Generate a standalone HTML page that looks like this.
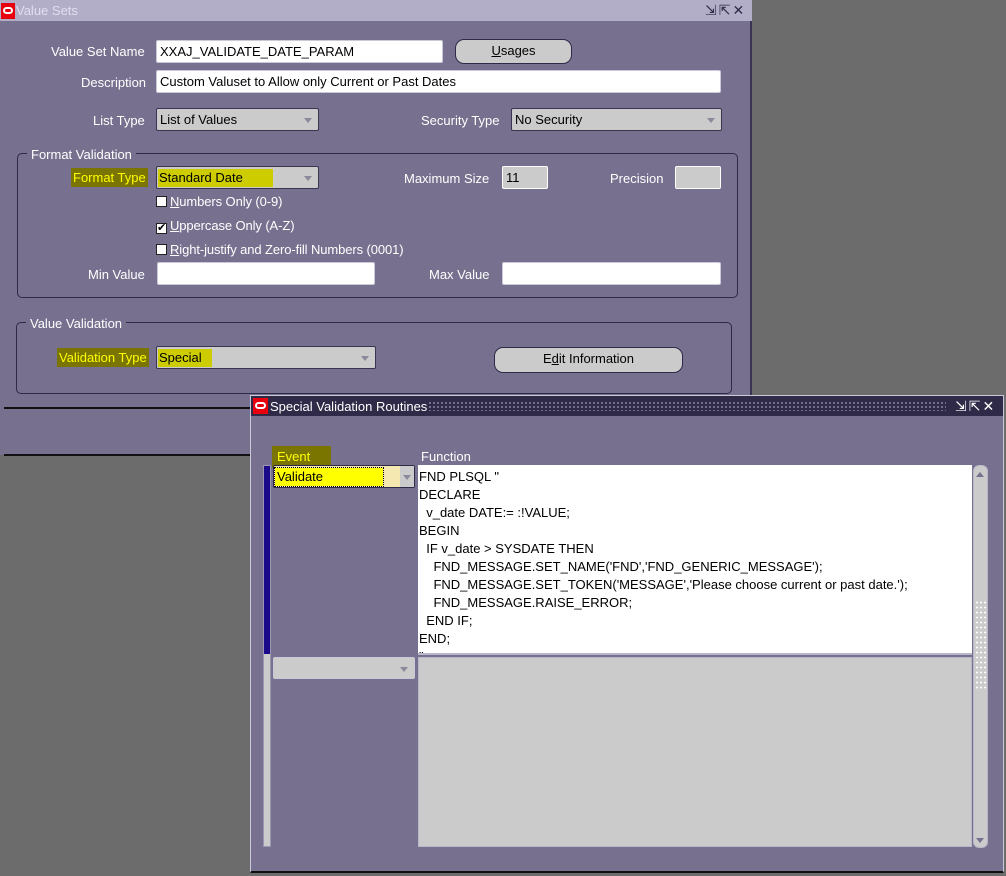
<!DOCTYPE html>
<html><head><style>
*{margin:0;padding:0;box-sizing:border-box}
body{width:1006px;height:876px;background:#6c6c6c;position:relative;overflow:hidden;font-family:"Liberation Sans",Arial,sans-serif;font-size:13px;color:#000}
.a{position:absolute}
.lbl{position:absolute;color:#fff;font-size:13px;white-space:nowrap}
.fld{position:absolute;background:#fff;border:1px solid #c9c9d9;border-radius:2px;height:23px;padding:2px 3px;font-size:13px;line-height:17px;white-space:nowrap}
.gr{background:#cbcbcb;border:1px solid #3a3550}
.dd::after{content:"";position:absolute;right:6px;top:9px;border-left:4px solid transparent;border-right:4px solid transparent;border-top:5px solid #8a8a9a}
.btn{position:absolute;background:#cbcbcb;border:1px solid #2e2a48;border-radius:9px;text-align:center;font-size:13px;line-height:22px}
.grp{position:absolute;border:1px solid #2e2a48;border-radius:5px}
.hl{background:#7a7500;color:#ffff00}
.cb{display:inline-block;width:11px;height:11px;background:#fff;border:1px solid #222;vertical-align:-1px;margin-right:3px}
</style></head><body>
<div class="a" style="left:0;top:0;width:752px;height:455px;background:#77708f;border-right:2px solid #3a3550"></div>
<div class="a" style="left:0;top:0;width:752px;height:21px;background:#b3aec7"></div>
<div class="a" style="left:1px;top:3px;width:14px;height:16px;background:#e8000c"><div class="a" style="left:2px;top:4px;width:10px;height:7px;border:2px solid #fff;border-radius:4px"></div></div>
<div class="lbl" style="left:16px;top:3px;color:#e0def0">Value Sets</div>
<div class="lbl" style="left:705px;top:2px;color:#2e2a48;font-size:14px;letter-spacing:2px">⇲⇱✕</div>
<div class="a" style="left:4px;top:407px;width:748px;height:2px;background:#111"></div>
<div class="a" style="left:4px;top:454px;width:748px;height:2px;background:#111"></div>

<div class="lbl" style="left:51px;top:44px">Value Set Name</div>
<div class="fld" style="left:156px;top:40px;width:287px">XXAJ_VALIDATE_DATE_PARAM</div>
<div class="btn" style="left:455px;top:39px;width:117px;height:25px"><u>U</u>sages</div>
<div class="lbl" style="left:81px;top:75px">Description</div>
<div class="fld" style="left:156px;top:70px;width:565px">Custom Valuset to Allow only Current or Past Dates</div>
<div class="lbl" style="left:93px;top:113px">List Type</div>
<div class="fld gr dd" style="left:156px;top:108px;width:163px">List of Values</div>
<div class="lbl" style="left:421px;top:113px">Security Type</div>
<div class="fld gr dd" style="left:511px;top:108px;width:211px">No Security</div>

<div class="grp" style="left:17px;top:153px;width:721px;height:145px"></div>
<div class="lbl" style="left:27px;top:147px;background:#77708f;padding:0 4px">Format Validation</div>
<div class="lbl hl" style="left:71px;top:168px;padding:2px 2px">Format Type</div>
<div class="fld gr dd" style="left:156px;top:166px;width:163px"><span style="background:#cccc00;padding:1px 30px 2px 1px;margin-left:-2px">Standard Date</span></div>
<div class="lbl" style="left:156px;top:194px;letter-spacing:-0.1px"><span class="cb"></span><u>N</u>umbers Only (0-9)</div>
<div class="lbl" style="left:156px;top:218px;letter-spacing:-0.1px"><span class="cb" style="font-size:11px;line-height:9px;color:#000;text-align:center">✔</span><u>U</u>ppercase Only (A-Z)</div>
<div class="lbl" style="left:156px;top:242px;letter-spacing:-0.1px"><span class="cb"></span><u>R</u>ight-justify and Zero-fill Numbers (0001)</div>
<div class="lbl" style="left:404px;top:171px">Maximum Size</div>
<div class="fld gr" style="left:502px;top:166px;width:46px;border-color:#fff">11</div>
<div class="lbl" style="left:610px;top:171px">Precision</div>
<div class="fld gr" style="left:675px;top:166px;width:46px;border-color:#fff"></div>
<div class="lbl" style="left:88px;top:267px">Min Value</div>
<div class="fld" style="left:157px;top:262px;width:218px"></div>
<div class="lbl" style="left:429px;top:267px">Max Value</div>
<div class="fld" style="left:502px;top:262px;width:219px"></div>

<div class="grp" style="left:16px;top:322px;width:716px;height:72px"></div>
<div class="lbl" style="left:26px;top:316px;background:#77708f;padding:0 4px">Value Validation</div>
<div class="lbl hl" style="left:57px;top:348px;padding:2px 2px">Validation Type</div>
<div class="fld gr dd" style="left:156px;top:346px;width:220px"><span style="background:#cccc00;padding:1px 10px 2px 1px;margin-left:-2px">Special</span></div>
<div class="btn" style="left:494px;top:347px;width:189px;height:26px">E<u>d</u>it Information</div>

<div class="a" style="left:250px;top:395px;width:754px;height:478px;background:#77708f;border:1px solid #c9c9d9;border-bottom:2px solid #111"></div>
<div class="a" style="left:251px;top:396px;width:752px;height:20px;background:#2e2a48"></div>
<div class="a" style="left:428px;top:401px;width:518px;height:10px;background-image:radial-gradient(#8a86a0 0.8px,transparent 1px);background-size:4px 4px"></div>
<div class="a" style="left:253px;top:398px;width:15px;height:16px;background:#e8000c"><div class="a" style="left:2px;top:4px;width:11px;height:7px;border:2px solid #fff;border-radius:4px"></div></div>
<div class="lbl" style="left:270px;top:399px;font-size:13px">Special Validation Routines</div>
<div class="lbl" style="left:955px;top:398px;font-size:14px;letter-spacing:2px">⇲⇱✕</div>

<div class="lbl hl" style="left:272px;top:446px;padding:3px 5px 2px;height:22px;width:59px">Event</div>
<div class="lbl" style="left:421px;top:449px">Function</div>
<div class="a" style="left:263px;top:465px;width:8px;height:382px;background:#cbcbcb;border:1px solid #9a98b0"></div>
<div class="a" style="left:264px;top:466px;width:6px;height:188px;background:#1a0a8a"></div>
<div class="fld" style="left:273px;top:465px;width:142px;height:23px;background:#f5e8b0;border:1px solid #2e2a48"><span style="background:#ffff00;padding:1px 60px 2px 2px;margin-left:-2px;outline:1px dotted #000">Validate</span></div>
<div class="a" style="left:400px;top:466px;width:14px;height:21px;background:#cbcbcb"></div>
<div class="a" style="left:403px;top:475px;border-left:4px solid transparent;border-right:4px solid transparent;border-top:5px solid #8a8a9a"></div>
<div class="fld gr dd" style="left:273px;top:657px;width:142px;height:22px;border-color:#c9c9d9"></div>
<div class="a" style="left:418px;top:465px;width:554px;height:190px;background:#fff;border-bottom:2px solid #b8b6c8;font-size:13px;line-height:18px;padding:3px 1px;white-space:pre;overflow:hidden">FND PLSQL "
DECLARE
  v_date DATE:= :!VALUE;
BEGIN
  IF v_date &gt; SYSDATE THEN
    FND_MESSAGE.SET_NAME('FND','FND_GENERIC_MESSAGE');
    FND_MESSAGE.SET_TOKEN('MESSAGE','Please choose current or past date.');
    FND_MESSAGE.RAISE_ERROR;
  END IF;
END;
"</div>
<div class="a" style="left:418px;top:657px;width:554px;height:190px;background:#cbcbcb;border:1px solid #b8b6c8"></div>
<div class="a" style="left:973px;top:465px;width:15px;height:383px;background:#cbcbcb;border:1px solid #b8b6c8;border-radius:6px"></div>
<div class="a" style="left:976px;top:472px;border-left:4px solid transparent;border-right:4px solid transparent;border-bottom:5px solid #77708f"></div>
<div class="a" style="left:976px;top:838px;border-left:4px solid transparent;border-right:4px solid transparent;border-top:5px solid #77708f"></div>
<div class="a" style="left:975px;top:600px;width:11px;height:90px;background-image:radial-gradient(#fff 0.8px,transparent 1px);background-size:4px 5px"></div>
</body></html>
